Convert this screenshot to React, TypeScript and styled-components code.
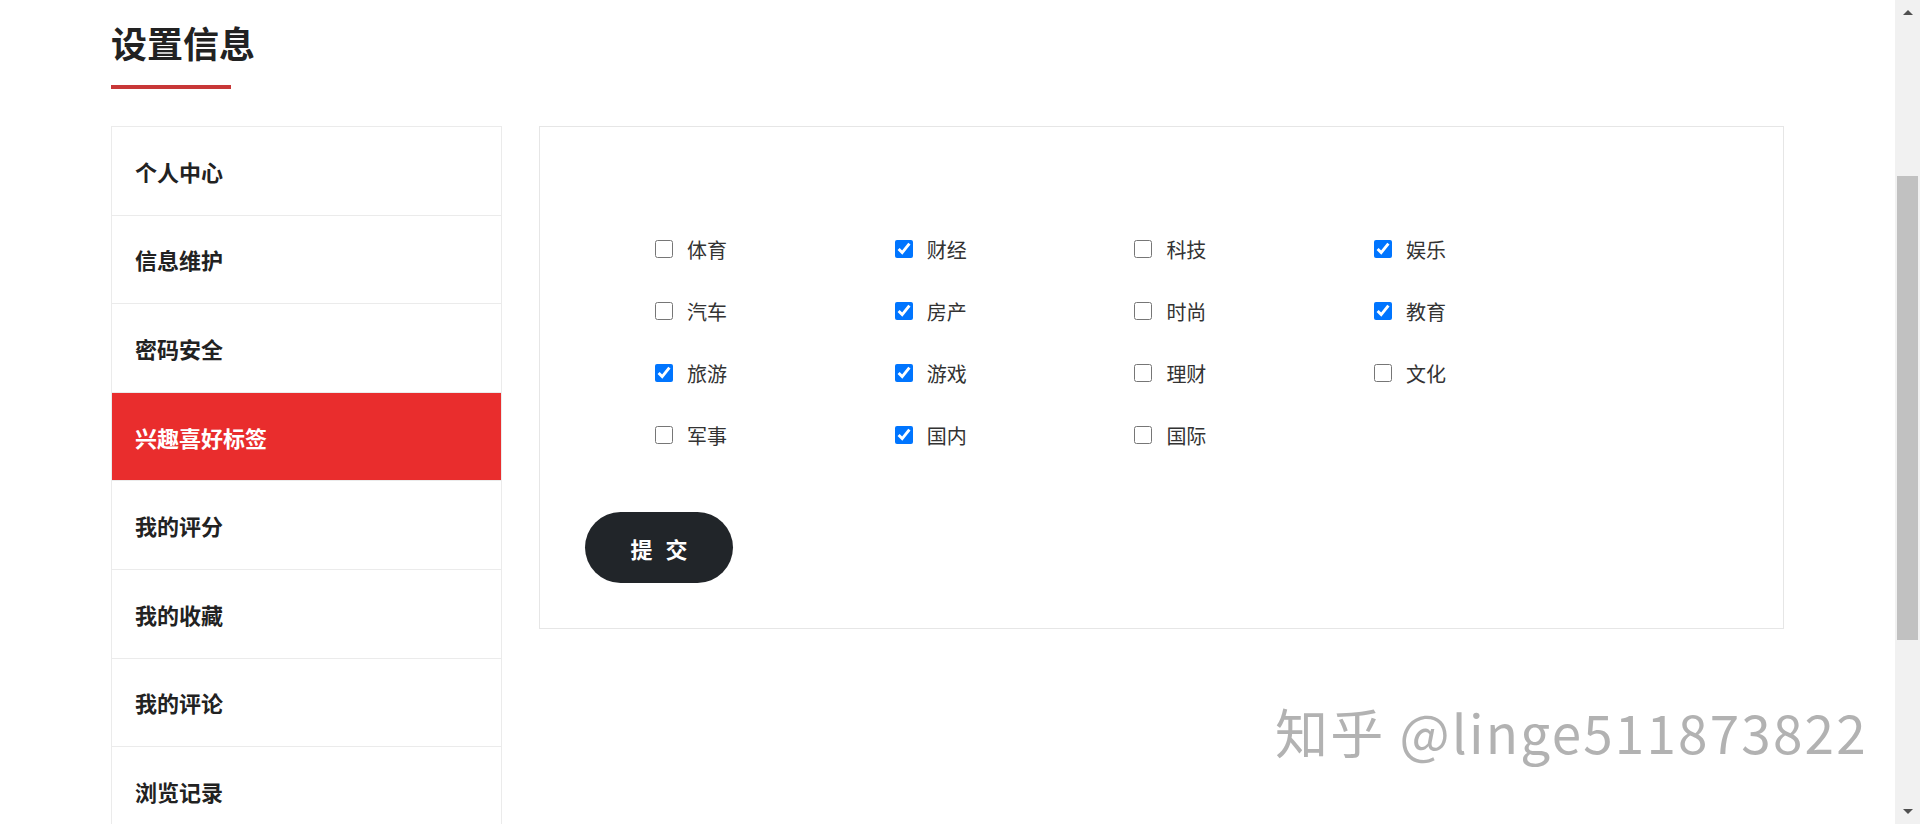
import React, { useLayoutEffect, useRef } from 'react'
import styled, { createGlobalStyle } from 'styled-components'

const GlobalStyle = createGlobalStyle`
  html, body {
    margin: 0;
    padding: 0;
    overflow: hidden;
    background: #fff;
  }
  * {
    box-sizing: border-box;
  }
`

const Frame = styled.div`
  display: flex;
  height: 100vh;
`

const Viewport = styled.div`
  flex: 1;
  height: 100vh;
  overflow: hidden;
  font-family: 'Noto Sans CJK SC', 'Noto Sans', sans-serif;
  color: #222;
`

const ScrollBar = styled.div`
  width: 25px;
  flex-shrink: 0;
  display: flex;
  flex-direction: column;
  background: #f1f1f1;
`

const ScrollArrow = styled.div<{ $down?: boolean }>`
  height: 25px;
  display: flex;
  align-items: center;
  justify-content: center;

  &::after {
    content: '';
    width: 0;
    height: 0;
    border-left: 5px solid transparent;
    border-right: 5px solid transparent;
    ${(p) => (p.$down ? 'border-top: 5px solid #505050;' : 'border-bottom: 5px solid #505050;')}
  }
`

const ScrollTrack = styled.div`
  flex: 1;
  padding: 151px 2px 0 2px;
`

const ScrollThumb = styled.div`
  height: 464px;
  background: #c1c1c1;
`

const Page = styled.div`
  padding: 303px 0 286px 111px;
`

const Container = styled.div`
  width: 1673px;
`

const Title = styled.h2`
  margin: 0;
  font-size: 36px;
  line-height: 43px;
  font-weight: 700;
  color: #222;
`

const TitleLine = styled.div`
  width: 120px;
  height: 4px;
  margin-top: 21px;
  background: #c83737;
`

const Body = styled.div`
  display: flex;
  align-items: flex-start;
  gap: 37px;
  margin-top: 37px;
`

const Sidebar = styled.ul`
  list-style: none;
  margin: 0;
  padding: 0;
  width: 391px;
  flex-shrink: 0;
  border: 1px solid #ebebeb;
  border-bottom: 0;
`

const SideItem = styled.li<{ $active?: boolean }>`
  display: flex;
  align-items: center;
  height: 88.6px;
  padding-left: 23px;
  font-size: 22px;
  font-weight: 700;
  color: ${(p) => (p.$active ? '#fff' : '#222')};
  background: ${(p) => (p.$active ? '#e92d2d' : '#fff')};
  border-bottom: 1px solid #ebebeb;
`

const Panel = styled.div`
  flex: 1;
  height: 503px;
  border: 1px solid #e6e6e6;
  padding: 91px 45px 0 45px;
`

const TagGrid = styled.div`
  display: grid;
  grid-template-columns: repeat(4, 239.7px);
  grid-auto-rows: 62px;
  margin-left: 70px;
`

const TagItem = styled.label`
  display: flex;
  align-items: center;
  gap: 14px;
  font-size: 20px;
  color: #333;
`

const Check = styled.input`
  width: 18px;
  height: 18px;
  margin: 0;
  accent-color: #0075ff;
`

const SubmitButton = styled.button`
  display: block;
  margin-top: 46px;
  width: 148px;
  height: 71px;
  border: 0;
  border-radius: 36px;
  background: #212529;
  color: #fff;
  font-family: 'Noto Sans CJK SC', sans-serif;
  font-size: 22px;
  font-weight: 700;
  letter-spacing: 4px;
  text-indent: 4px;
`

const Watermark = styled.div`
  position: fixed;
  left: 1275px;
  top: 697px;
  font-family: 'Noto Sans CJK SC', 'Noto Sans', sans-serif;
  font-size: 53px;
  line-height: 1.3;
  letter-spacing: 2.2px;
  color: rgba(165, 165, 165, 0.85);
  text-shadow: 2px 2px 0 rgba(255, 255, 255, 0.9);
  pointer-events: none;
  white-space: nowrap;
`

const menu = ['个人中心', '信息维护', '密码安全', '兴趣喜好标签', '我的评分', '我的收藏', '我的评论', '浏览记录']

const tags: [string, boolean][] = [
  ['体育', false],
  ['财经', true],
  ['科技', false],
  ['娱乐', true],
  ['汽车', false],
  ['房产', true],
  ['时尚', false],
  ['教育', true],
  ['旅游', true],
  ['游戏', true],
  ['理财', false],
  ['文化', false],
  ['军事', false],
  ['国内', true],
  ['国际', false],
]

export default function App() {
  const viewRef = useRef<HTMLDivElement>(null)

  useLayoutEffect(() => {
    if (viewRef.current) viewRef.current.scrollTop = 282
  }, [])

  return (
    <>
      <GlobalStyle />
      <Frame>
        <Viewport ref={viewRef}>
          <Page>
            <Container>
              <Title>设置信息</Title>
              <TitleLine />
              <Body>
                <Sidebar>
                  {menu.map((m) => (
                    <SideItem key={m} $active={m === '兴趣喜好标签'}>
                      {m}
                    </SideItem>
                  ))}
                </Sidebar>
                <Panel>
                  <TagGrid>
                    {tags.map(([name, checked]) => (
                      <TagItem key={name}>
                        <Check type="checkbox" defaultChecked={checked} />
                        {name}
                      </TagItem>
                    ))}
                  </TagGrid>
                  <SubmitButton type="button">提 交</SubmitButton>
                </Panel>
              </Body>
            </Container>
          </Page>
        </Viewport>
        <ScrollBar>
          <ScrollArrow />
          <ScrollTrack>
            <ScrollThumb />
          </ScrollTrack>
          <ScrollArrow $down />
        </ScrollBar>
        <Watermark>知乎 @linge511873822</Watermark>
      </Frame>
    </>
  )
}
